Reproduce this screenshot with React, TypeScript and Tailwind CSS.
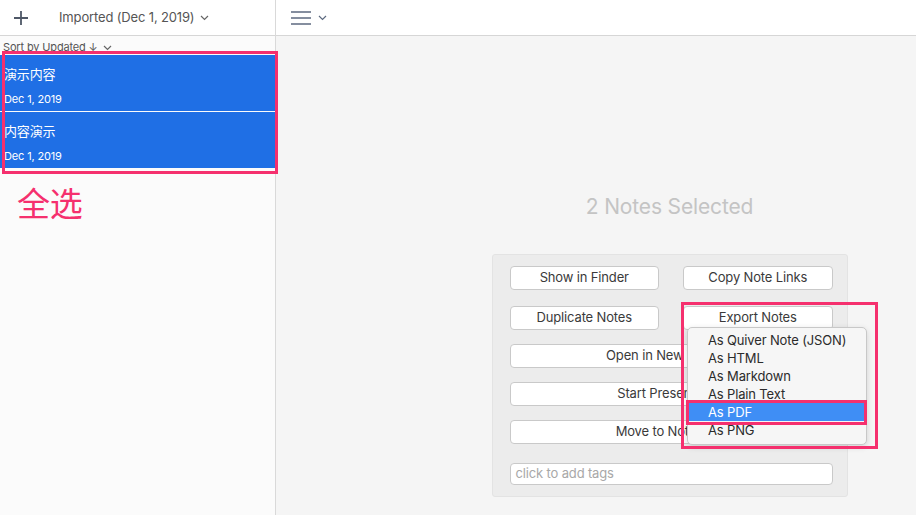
import React from "react";

const PINK = "border-[#f5306e]";

//small chevron used in headers
const Chevron = ({ className }: { className?: string }) => (
  <svg width="9" height="6" viewBox="0 0 9 6" className={className}>
    <path d="M1 1l3.5 3.5L8 1" fill="none" stroke="currentColor" strokeWidth="1.2" />
  </svg>
);

const ActionButton = ({ title }: { title: string }) => (
  <button className="h-[24px] w-full rounded-[4px] border border-[#c9c9c9] bg-white text-[13px] text-[#3a3a3a] whitespace-nowrap overflow-hidden">
    {title}
  </button>
);

const notes = [
  { title: "演示内容", date: "Dec 1, 2019" },
  { title: "内容演示", date: "Dec 1, 2019" },
];

const exportItems = [
  "As Quiver Note (JSON)",
  "As HTML",
  "As Markdown",
  "As Plain Text",
  "As PDF",
  "As PNG",
];

export default function App() {
  return (
    <div
      className="relative flex w-[916px] h-[515px] overflow-hidden bg-[#f5f5f5] tracking-[-0.15px]"
      style={{ fontFamily: "Inter, 'Noto Sans CJK SC', sans-serif" }}
    >
      {/* note list */}
      <div className="flex w-[276px] shrink-0 flex-col border-r border-[#d9d9d9] bg-[#fbfbfb]">
        <div className="flex h-[36px] items-center border-b border-[#d6d6d6] bg-white">
          <svg width="16" height="16" viewBox="0 0 16 16" className="ml-[13px] text-[#4f5867]">
            <path d="M8 1v14M1 8h14" stroke="currentColor" strokeWidth="1.8" />
          </svg>
          <span className="ml-[30px] text-[13px] text-[#555]">Imported (Dec 1, 2019)</span>
          <Chevron className="ml-[6px] text-[#666]" />
        </div>
        <div className="flex h-[19px] items-center pl-[3px] pt-[4px] text-[11px] text-[#555]">
          <span>Sort by Updated ↓</span>
          <Chevron className="ml-[5px] text-[#666]" />
        </div>
        <div className="flex flex-col gap-px">
          {notes.map((n) => (
            <div key={n.title} className="h-[56px] bg-[#1f6fe5] pl-[4px] pt-[10px] text-white">
              <div className="text-[13px] leading-[18px]">{n.title}</div>
              <div className="mt-[9px] text-[11px] leading-[14px]">{n.date}</div>
            </div>
          ))}
        </div>
        <div className="ml-[17px] mt-[18px] text-[33px] leading-[36px] text-[#f5306e]">全选</div>
      </div>

      {/* detail area */}
      <div className="flex flex-1 flex-col">
        <div className="flex h-[36px] items-center border-b border-[#d6d6d6] bg-white">
          <svg width="20" height="14" viewBox="0 0 20 14" className="ml-[15px] text-[#5d6a80]">
            <path d="M0 1h20M0 7h20M0 13h20" stroke="currentColor" strokeWidth="1.3" />
          </svg>
          <Chevron className="ml-[7px] text-[#5d6a80]" />
        </div>
        <div className="flex flex-1 flex-col items-center pl-[147px]">
          <div className="mt-[157px] text-[21px] leading-[28px] text-[#c4c4c4]">2 Notes Selected</div>
          <div className="mt-[33px] w-[356px] rounded-[3px] border border-[#e3e3e3] bg-[#ececec] pl-[17px] pr-[14px] pt-[11px] pb-[11px]">
            <div className="grid grid-cols-2 gap-x-[24px] gap-y-[16px]">
              <ActionButton title="Show in Finder" />
              <ActionButton title="Copy Note Links" />
              <ActionButton title="Duplicate Notes" />
              <ActionButton title="Export Notes" />
            </div>
            <div className="mt-[14px] flex flex-col gap-[14px]">
              <ActionButton title="Open in New Window" />
              <ActionButton title="Start Presentation" />
              <ActionButton title="Move to Notebook" />
            </div>
            <div className="mt-[19px] flex h-[22px] items-center rounded-[4px] border border-[#c9c9c9] bg-white pl-[5px] text-[13px] text-[#a8a8a8]">
              click to add tags
            </div>
          </div>
        </div>
      </div>

      {/* export menu */}
      <div className="absolute left-[687px] top-[327px] w-[180px] rounded-[5px] border border-[#c8c8c8] bg-[#f6f6f6] pt-[3px] pb-[5px] shadow-[0_2px_6px_rgba(0,0,0,0.15)]">
        {exportItems.map((item) => (
          <div
            key={item}
            className={`h-[18px] pl-[20px] text-[13px] leading-[18px] ${item === "As PDF" ? "bg-[#3f8ef5] text-white" : "text-[#2b2b2b]"}`}
          >
            {item}
          </div>
        ))}
      </div>

      {/* annotation boxes */}
      <div className={`pointer-events-none absolute left-[2px] top-[51px] h-[123px] w-[276px] border-[3px] ${PINK}`} />
      <div className={`pointer-events-none absolute left-[681px] top-[302px] h-[147px] w-[197px] border-[3px] ${PINK}`} />
      <div className={`pointer-events-none absolute left-[686px] top-[400px] h-[25px] w-[181px] border-[3px] ${PINK}`} />
    </div>
  );
}
